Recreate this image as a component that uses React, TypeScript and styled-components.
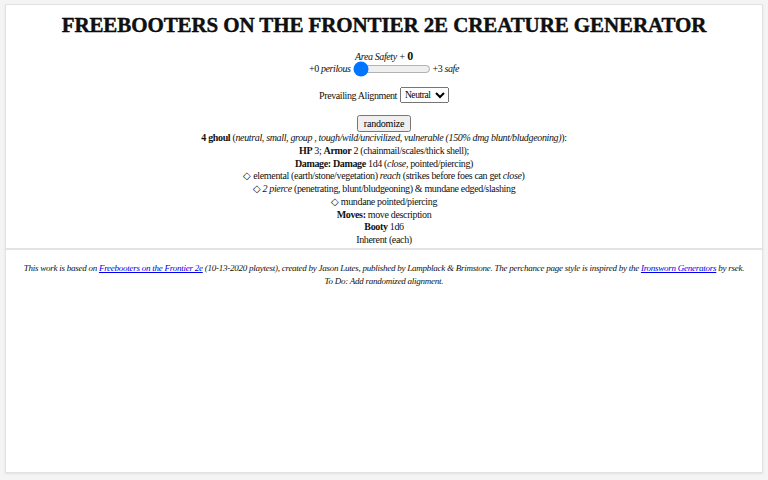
import { useState } from 'react';
import styled, { createGlobalStyle, css } from 'styled-components';

const serif = css`
  font-family: 'Liberation Serif', 'Times New Roman', serif;
`;

const Global = createGlobalStyle`
  html, body {
    margin: 0;
    background: #f4f4f4;
  }
  body {
    padding: 4px 5px 5px 5px;
    ${serif}
  }
`;

const Card = styled.div`
  ${serif}
  background: #fff;
  border: 1px solid #e2e2e2;
  box-shadow: 0 1px 2px rgba(0, 0, 0, 0.08);
  height: 469px;
  box-sizing: border-box;
  display: flex;
  flex-direction: column;
  align-items: center;
  color: #111;
`;

const Title = styled.h1`
  margin: 8px 0 0;
  font-size: 21px;
  line-height: 24px;
  font-weight: 700;
  letter-spacing: -0.1px;
  -webkit-text-stroke: 0.4px #000;
  text-transform: uppercase;
  white-space: nowrap;
`;

const Control = styled.div`
  display: flex;
  flex-direction: column;
  align-items: center;
  font-size: 10px;
  letter-spacing: -0.4px;
`;

const SafetyLabel = styled.div`
  font-style: italic;
  margin-top: 13px;
  line-height: 12px;
  b {
    font-style: normal;
    font-size: 12px;
  }
`;

const SliderRow = styled.div`
  display: flex;
  align-items: center;
  gap: 2px;
  line-height: 12px;
`;

const Slider = styled.input`
  width: 78px;
  height: 10px;
  margin: 0;
`;

const AlignRow = styled.label`
  margin-top: 12px;
  display: flex;
  align-items: center;
  gap: 3px;
  font-size: 10px;
  letter-spacing: -0.4px;
`;

const Picker = styled.select`
  ${serif}
  font-size: 9.5px;
  letter-spacing: -0.4px;
  height: 16px;
  padding: 0;
`;

const Randomize = styled.button`
  ${serif}
  margin-top: 12px;
  font-size: 10px;
  letter-spacing: -0.2px;
  height: 17px;
  padding: 0 5px;
`;

const Stats = styled.div`
  font-size: 10px;
  letter-spacing: -0.35px;
  line-height: 12.75px;
  text-align: center;
`;

const Line = styled.div`
  white-space: nowrap;
`;

const Divider = styled.hr`
  align-self: stretch;
  border: 0;
  border-top: 2px solid #e3e3e3;
  margin: 1px 0 0;
`;

const Footer = styled.footer`
  margin-top: 12px;
  font-size: 9px;
  letter-spacing: -0.25px;
  line-height: 13px;
  font-style: italic;
  text-align: center;
  a {
    color: #0000ee;
  }
`;

const FooterLine = styled.div`
  white-space: nowrap;
`;

export default function App() {
  const [safety, setSafety] = useState(0);
  const [alignment, setAlignment] = useState('Neutral');

  return (
    <>
      <Global />
      <Card>
        <Title>Freebooters on the Frontier 2e Creature Generator</Title>
        <Control>
          <SafetyLabel>
            Area Safety + <b>{safety}</b>
          </SafetyLabel>
          <SliderRow>
            <span>
              +0 <i>perilous</i>
            </span>
            <Slider
              type="range"
              min={0}
              max={3}
              value={safety}
              onChange={(e) => setSafety(Number(e.target.value))}
            />
            <span>
              +3 <i>safe</i>
            </span>
          </SliderRow>
        </Control>
        <AlignRow>
          Prevailing Alignment
          <Picker value={alignment} onChange={(e) => setAlignment(e.target.value)}>
            <option>Evil</option>
            <option>Chaotic</option>
            <option>Neutral</option>
            <option>Lawful</option>
            <option>Good</option>
          </Picker>
        </AlignRow>
        <Randomize>randomize</Randomize>
        <Stats>
          <Line>
            <b>4 ghoul</b> (<i>neutral, small, group , tough/wild/uncivilized, vulnerable (150% dmg blunt/bludgeoning)</i>):
          </Line>
          <Line>
            <b>HP</b> 3; <b>Armor</b> 2 (chainmail/scales/thick shell);
          </Line>
          <Line>
            <b>Damage: Damage</b> 1d4 (<i>close</i>, pointed/piercing)
          </Line>
          <Line>
            ◇ elemental (earth/stone/vegetation) <i>reach</i> (strikes before foes can get <i>close</i>)
          </Line>
          <Line>
            ◇ <i>2 pierce</i> (penetrating, blunt/bludgeoning) &amp; mundane edged/slashing
          </Line>
          <Line>◇ mundane pointed/piercing</Line>
          <Line>
            <b>Moves:</b> move description
          </Line>
          <Line>
            <b>Booty</b> 1d6
          </Line>
          <Line>Inherent (each)</Line>
        </Stats>
        <Divider />
        <Footer>
          <FooterLine>
            This work is based on <a href="#">Freebooters on the Frontier 2e</a> (10-13-2020 playtest), created by Jason Lutes, published by
            Lampblack &amp; Brimstone. The perchance page style is inspired by the <a href="#">Ironsworn Generators</a> by rsek.
          </FooterLine>
          <FooterLine>To Do: Add randomized alignment.</FooterLine>
        </Footer>
      </Card>
    </>
  );
}
